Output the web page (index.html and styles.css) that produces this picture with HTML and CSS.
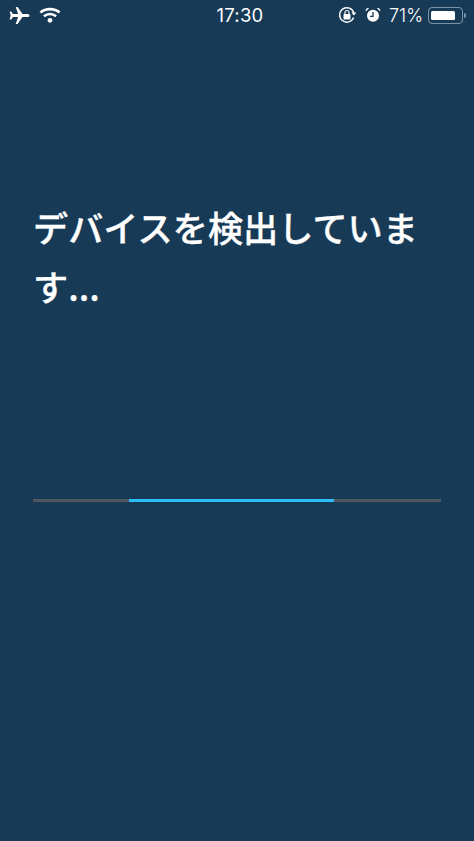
FILE: index.html
```html
<!DOCTYPE html>
<html lang="ja">
<head>
<meta charset="utf-8">
<title>デバイスを検出しています</title>
<link rel="stylesheet" href="styles.css">
</head>
<body>
<div class="screen">
  <header class="status">
    <div class="status-left">
      <svg class="ic-plane" viewBox="0 0 22 18"><path fill="#fff" d="M21.5 9c0-1-1.1-1.6-2.3-1.6h-4.7L9.6.6H7.700l2.400 6.800H5L3.200 5H1.600l1.100 4-1.100 4h1.600L5 10.600h5.100l-2.400 6.800h1.900l4.900-6.800h4.700c1.200 0 2.400-.600 2.400-1.600z"/></svg>
      <svg class="ic-wifi" viewBox="0 0 20 15"><path fill="none" stroke="#fff" stroke-width="2.400" d="M1 5.200C6 .9 14 .9 19 5.200"/><path fill="none" stroke="#fff" stroke-width="2.400" d="M4.300 8.700c3.300-2.800 8.100-2.800 11.400 0"/><circle cx="10" cy="12.500" r="2.200" fill="#fff"/></svg>
    </div>
    <div class="clock">17:30</div>
    <div class="status-right">
      <svg class="ic-lock" viewBox="0 0 18 18"><path fill="none" stroke="#fff" stroke-width="1.400" d="M15.600 11.500A7.200 7.200 0 1 1 15.800 7"/><path fill="#fff" d="M13.300 6.500h5l-2.400 3z"/><rect x="5.500" y="8" width="7" height="5.500" rx=".8" fill="#fff"/><path fill="none" stroke="#fff" stroke-width="1.200" d="M7 8V6.500a2 2 0 0 1 4 0V8"/></svg>
      <svg class="ic-alarm" viewBox="0 0 16 16"><circle cx="8" cy="8.800" r="6" fill="#fff"/><path fill="none" stroke="#17395a" stroke-width="1.300" d="M8 5v4.300H5"/><path fill="#fff" d="M.7 4.500 4 1.300C2.500.3.200 1.700.7 4.500zM15.300 4.500 12 1.300c1.500-1 3.800.4 3.300 3.200z"/></svg>
      <span class="pct">71%</span>
      <div class="battery"><div class="battery-body"><div class="battery-fill"></div></div><div class="battery-cap"></div></div>
    </div>
  </header>
  <main class="content">
    <h1 class="title">デバイスを検出しています...</h1>
    <div class="track"><div class="bar"></div></div>
  </main>
</div>
</body>
</html>
```
FILE: styles.css
```css
* { box-sizing: border-box; }
html, body { margin: 0; padding: 0; }
.screen { width: 474px; height: 841px; background: #173a56; color: #fff; overflow: hidden; font-family: "Liberation Sans", Arial, sans-serif; }
.status { display: grid; grid-template-columns: 1fr auto 1fr; align-items: center; height: 30px; padding: 0 8px; }
.status-left { display: flex; align-items: center; gap: 9px; }
.status-right { display: flex; align-items: center; justify-content: flex-end; }
.ic-plane { width: 22px; height: 19px; }
.ic-wifi { width: 22px; height: 16px; margin-top: -1px; }
.clock { padding-left: 6px; font-family: Inter, "Liberation Sans", sans-serif; font-size: 18.500px; letter-spacing: .2px; }
.ic-lock { width: 18px; height: 18px; margin-right: 9px; }
.ic-alarm { width: 16px; height: 16px; margin-right: 8px; }
.pct { font-family: Inter, "Liberation Sans", sans-serif; font-size: 18px; font-weight: 300; margin-right: 5px; }
.battery { display: flex; align-items: center; }
.battery-body { width: 35px; height: 17px; border: 1px solid #7d93a6; border-radius: 4px; padding: 3px 2px; }
.battery-fill { width: 24px; height: 100%; background: #fff; border-radius: 1.500px; }
.battery-cap { width: 2px; height: 5px; margin-left: 1px; background: #7d93a6; border-radius: 0 2px 2px 0; }
.content { padding: 167px 33px 0; }
.title { margin: 0; font-family: "Noto Sans CJK JP", sans-serif; font-size: 35.200px; font-weight: 500; -webkit-text-stroke: .3px #fff; line-height: 59px; }
.track { height: 3px; margin-top: 184px; background: #50575f; padding-left: 96px; }
.bar { width: 205px; height: 3px; background: #2dbcf3; }
```
